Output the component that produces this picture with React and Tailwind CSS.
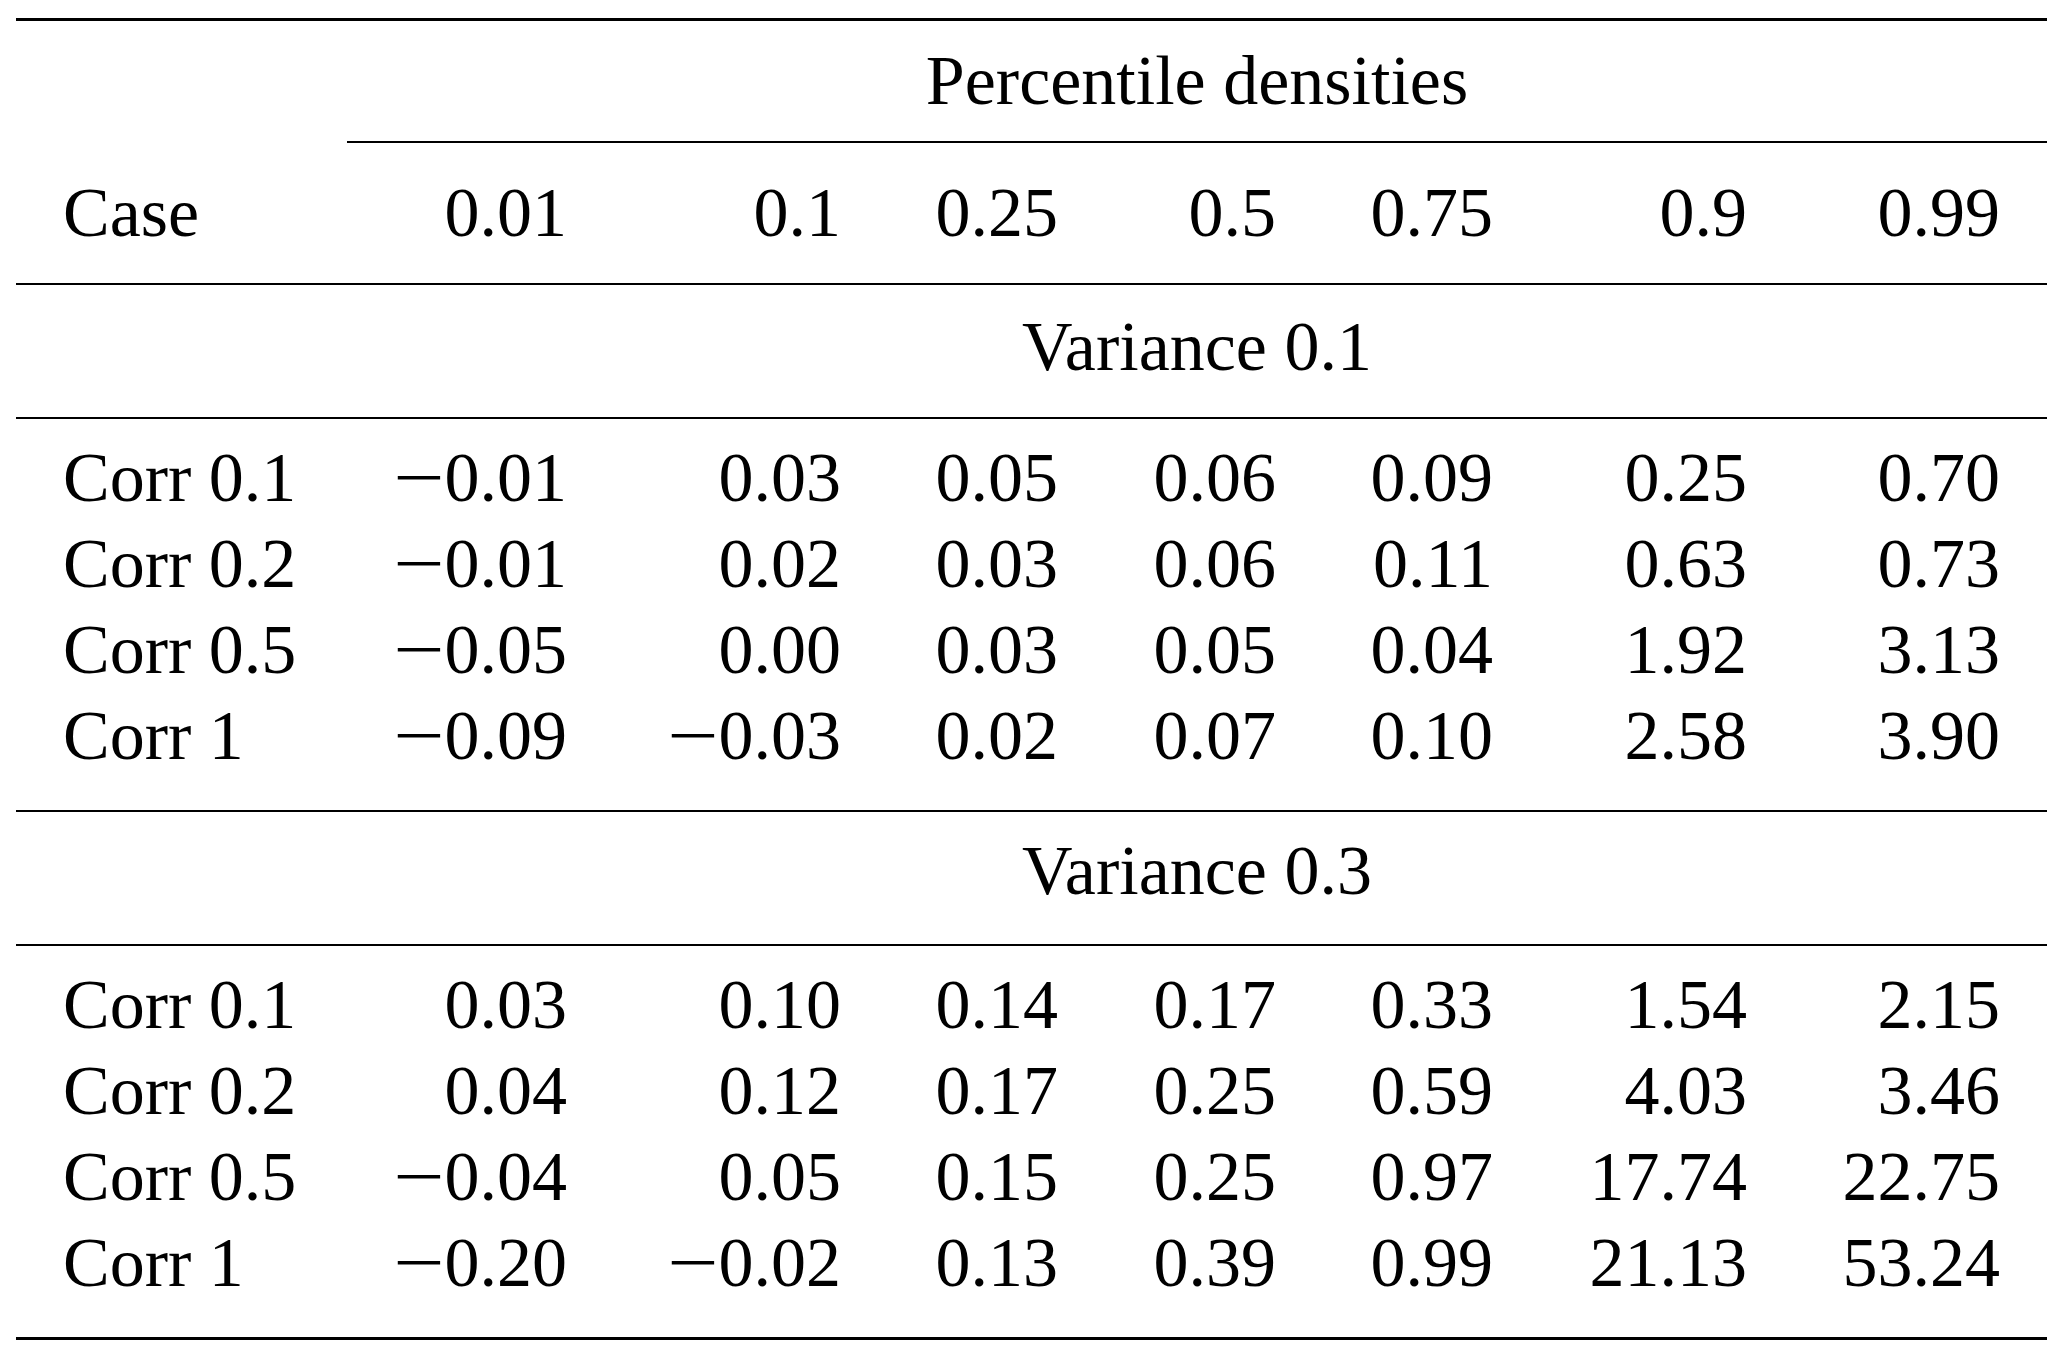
const COLS = 'grid grid-cols-[331px_267px_274px_217px_218px_217px_254px_253px]';

const headers = ['0.01', '0.1', '0.25', '0.5', '0.75', '0.9', '0.99'];

const sections = [
  {
    title: 'Variance 0.1',
    rows: [
      ['Corr 0.1', '−0.01', '0.03', '0.05', '0.06', '0.09', '0.25', '0.70'],
      ['Corr 0.2', '−0.01', '0.02', '0.03', '0.06', '0.11', '0.63', '0.73'],
      ['Corr 0.5', '−0.05', '0.00', '0.03', '0.05', '0.04', '1.92', '3.13'],
      ['Corr 1', '−0.09', '−0.03', '0.02', '0.07', '0.10', '2.58', '3.90'],
    ],
  },
  {
    title: 'Variance 0.3',
    rows: [
      ['Corr 0.1', '0.03', '0.10', '0.14', '0.17', '0.33', '1.54', '2.15'],
      ['Corr 0.2', '0.04', '0.12', '0.17', '0.25', '0.59', '4.03', '3.46'],
      ['Corr 0.5', '−0.04', '0.05', '0.15', '0.25', '0.97', '17.74', '22.75'],
      ['Corr 1', '−0.20', '−0.02', '0.13', '0.39', '0.99', '21.13', '53.24'],
    ],
  },
];

const Rule = ({ thick }) => (
  <div className={thick ? 'h-[3px] bg-black' : 'h-[2px] bg-black'} />
);

// math minus in the source is longer than the text one
const Num = ({ value }) =>
  value.startsWith('−') ? (
    <>
      <span className="inline-block origin-right scale-x-[1.3]">−</span>
      {value.slice(1)}
    </>
  ) : (
    value
  );

const Row = ({ cells, className = '' }) => (
  <div className={`${COLS} ${className}`}>
    {cells.map((c, i) =>
      i === 0 ? (
        <div key={i} className="pl-[47px] text-left whitespace-nowrap">
          {c}
        </div>
      ) : (
        <div key={i} className="pr-[47px] text-right whitespace-nowrap">
          <Num value={c} />
        </div>
      )
    )}
  </div>
);

const Section = ({ title, rows, first }) => (
  <>
    <div className={COLS}>
      <div />
      <div
        className={`col-span-7 text-center ${
          first ? 'leading-[124px] pb-[8px]' : 'leading-[118px] pb-[14px]'
        }`}
      >
        {title}
      </div>
    </div>
    <Rule />
    <div className="pt-[16px] pb-[31px]">
      {rows.map((r, i) => (
        <Row key={i} cells={r} className="h-[86px] leading-[86px]" />
      ))}
    </div>
  </>
);

export default function App() {
  return (
    <div className="min-h-screen w-full bg-white text-black">
      <div className="ml-[16px] w-[2031px] pt-[18px] text-[70px] font-['Liberation_Serif','Times_New_Roman',serif]">
        <Rule thick />
        <div className={COLS}>
          <div />
          <div className="col-span-7 text-center leading-[120px]">Percentile densities</div>
        </div>
        <div className={COLS}>
          <div />
          <div className="col-span-7">
            <Rule />
          </div>
        </div>
        <Row cells={['Case', ...headers]} className="h-[140px] leading-[140px]" />
        <Rule />
        <Section {...sections[0]} first />
        <Rule />
        <Section {...sections[1]} />
        <Rule thick />
      </div>
    </div>
  );
}
